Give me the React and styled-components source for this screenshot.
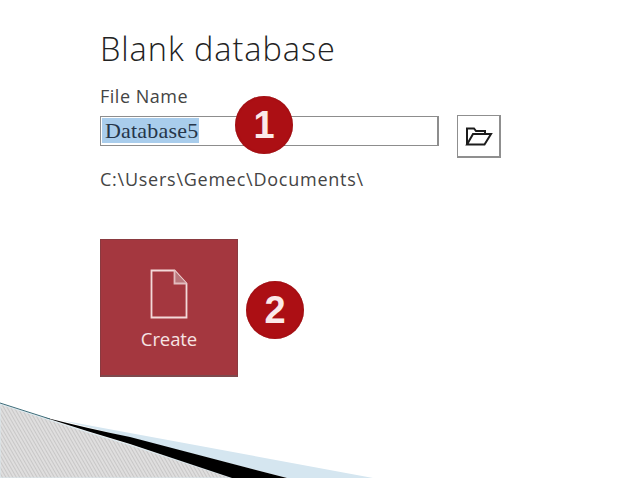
import React from "react";
import styled, { createGlobalStyle } from "styled-components";

const Global = createGlobalStyle`
  html, body { margin: 0; padding: 0; background: #fff; }
  body { font-family: "Open Sans", "Liberation Sans", sans-serif; }
`;

const Slide = styled.div`
  position: relative;
  width: 638px;
  height: 478px;
  overflow: hidden;
  background: #fff;
  box-sizing: border-box;
  padding: 28px 0 0 100px;
  display: flex;
  flex-direction: column;
`;

const Title = styled.h1`
  margin: 0;
  font-size: 32.5px;
  line-height: 42px;
  font-weight: 300;
  color: #222;
  letter-spacing: 0.95px;
`;

const FieldLabel = styled.div`
  margin-top: 15px;
  font-size: 18px;
  line-height: 22px;
  color: #444;
  letter-spacing: 0.5px;
`;

const FieldRow = styled.div`
  display: flex;
  align-items: flex-start;
  gap: 18px;
  margin-top: 8px;
`;

const InputBox = styled.div`
  position: relative;
  box-sizing: border-box;
  width: 339px;
  height: 30px;
  margin-top: 1px;
  border: 1px solid #8d8d8d;
  border-right-width: 2px;
  padding: 1px 0 0 1px;
  background: #fff;
`;

const Selected = styled.span`
  display: inline-block;
  height: 25px;
  padding: 0 1px 0 3px;
  background: #a9cdec;
  color: #26364a;
  font-family: "Liberation Serif", serif;
  font-size: 22px;
  line-height: 25px;
  letter-spacing: 0.2px;
`;

const Badge = styled.div`
  width: 58px;
  height: 58px;
  border-radius: 50%;
  background: #ac0f14;
  box-shadow: inset 0 0 2px #8f1013;
  color: #fbe9e9;
  font-family: "Liberation Sans", sans-serif;
  font-weight: 700;
  font-size: 38px;
  line-height: 58px;
  text-align: center;
  flex: none;
`;

const FieldBadge = styled(Badge)`
  position: absolute;
  left: 134px;
  top: -21px;
`;

const StepBadge = styled(Badge)`
  margin-top: 4px;
`;

const FolderButton = styled.button`
  box-sizing: border-box;
  width: 44px;
  height: 43px;
  padding: 0;
  background: #fff;
  border: 1px solid #8f8f8f;
  border-right-width: 2px;
  border-bottom-width: 2px;
  display: flex;
  align-items: center;
  justify-content: center;
`;

const PathText = styled.div`
  margin-top: 10px;
  font-size: 18px;
  line-height: 22px;
  color: #444;
  letter-spacing: 0.75px;
`;

const CreateRow = styled.div`
  display: flex;
  align-items: center;
  gap: 8px;
  margin-top: 49px;
`;

const CreateTile = styled.div`
  box-sizing: border-box;
  width: 138px;
  height: 138px;
  background: #a4373f;
  border: 1px solid #8a3a40;
  border-bottom: 2px solid #7d4a4e;
  color: #f6e4e4;
  display: flex;
  flex-direction: column;
  align-items: center;
  padding-top: 29px;
  gap: 9px;
`;

const CreateLabel = styled.div`
  font-size: 18.5px;
  line-height: 22px;
  font-weight: 500;
  letter-spacing: -0.1px;
`;

const Swoosh = styled.svg`
  position: absolute;
  left: 0;
  bottom: 0;
`;

const FolderIcon = () => (
  <svg width="28" height="21" viewBox="0 0 28 21" fill="none" stroke="#1c1c1c" strokeWidth="2">
    <path d="M2 18.5V2.5h7l2 2.5h9v3" />
    <path d="M2 18.5h17.5L26 8H8L2 18.5z" />
  </svg>
);

const PageIcon = () => (
  <svg width="38" height="50" viewBox="0 0 38 50" fill="none" stroke="#f3d9d9" strokeWidth="1.8">
    <path d="M1.5 1.5h23l12 13v34h-35z" />
    <path d="M24.5 1.5v13h12" stroke="#e3bcbe" fill="#b9767b" />
  </svg>
);

const App = () => (
  <>
    <Global />
    <Slide>
      <Title>Blank database</Title>
      <FieldLabel>File Name</FieldLabel>
      <FieldRow>
        <InputBox>
          <Selected>Database5</Selected>
          <FieldBadge>1</FieldBadge>
        </InputBox>
        <FolderButton aria-label="Browse">
          <FolderIcon />
        </FolderButton>
      </FieldRow>
      <PathText>C:\Users\Gemec\Documents\</PathText>
      <CreateRow>
        <CreateTile>
          <PageIcon />
          <CreateLabel>Create</CreateLabel>
        </CreateTile>
        <StepBadge>2</StepBadge>
      </CreateRow>
      <Swoosh width="400" height="80" viewBox="0 398 400 80">
        <defs>
          <pattern id="hatch" width="3" height="3" patternUnits="userSpaceOnUse" patternTransform="rotate(-30)">
            <rect width="3" height="3" fill="#dfdede" />
            <rect width="1" height="3" fill="#c8c7c7" />
          </pattern>
        </defs>
        <path d="M60 420 L130 433 L373 478 H287 Z" fill="#d5e6f0" />
        <path d="M0 404 L87 432 L130 445 L232 478 H0 Z" fill="url(#hatch)" stroke="#dbe9ef" strokeWidth="1" />
        <path d="M43 417 Q90 429 130 437 L287 478 H232 L130 444 L87 431 Z" fill="#000" />
        <path d="M0 403 L50 419" stroke="#3d6b78" strokeWidth="1" />
      </Swoosh>
    </Slide>
  </>
);

export default App;
